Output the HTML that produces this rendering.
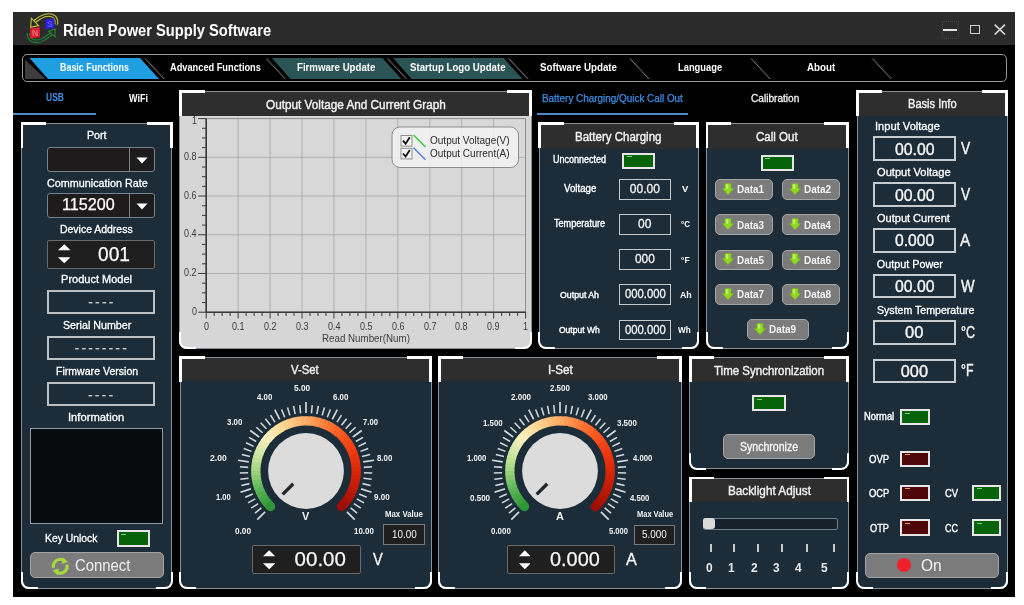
<!DOCTYPE html>
<html><head><meta charset="utf-8"><title>Riden Power Supply Software</title>
<style>
html,body{margin:0;padding:0;background:#fff;}
body{width:1024px;height:605px;position:relative;overflow:hidden;filter:blur(0.45px);font-family:"Liberation Sans",sans-serif;}
.a{position:absolute;display:block;}
.t{position:absolute;white-space:nowrap;transform-origin:0 50%;}
</style></head><body>
<div class="a" style="left:13.2px;top:12px;width:1002.3px;height:584.6px;background:#000;"></div>
<div class="a" style="left:13.2px;top:12px;width:1002.3px;height:33.4px;background:#2b2b2b;"></div>
<svg class="a" style="left:24px;top:12px" width="40" height="33" viewBox="24 12 40 33">
<path d="M56.3 24.5 C58 14.5 48 13 40.5 17.5 L34.5 21.5" fill="none" stroke="#c9c336" stroke-width="3.6"/>
<path d="M56.3 24.5 C58 14.5 48 13 40.5 17.5 L34.5 21.5" fill="none" stroke="#2b2b2b" stroke-width="1.5"/>
<path d="M30.6 27.3 L31.4 18.2 L38.6 25.6 Z" fill="#2b2b2b" stroke="#c9c336" stroke-width="1.1"/>
<path d="M28.5 33 C28 41.5 37 43 43 39.5 L52 33.5" fill="none" stroke="#1f8a34" stroke-width="3.6"/>
<path d="M28.5 33 C28 41.5 37 43 43 39.5 L52 33.5" fill="none" stroke="#2b2b2b" stroke-width="1.5"/>
<path d="M55 29 L55 36.8 L48.6 31.2 Z" fill="#2b2b2b" stroke="#1f8a34" stroke-width="1.1"/>
<path d="M45.2 19.4 L54.4 18.2 L54.4 28 L45.2 29.2 Z" fill="#2a1fd2"/>
<path d="M30 28.3 L40 27.2 L40 37.3 L30 38.4 Z" fill="#d81c2c"/>
<text x="35" y="36.4" font-size="8.5" font-weight="bold" text-anchor="middle" fill="#f2787e" font-family="Liberation Sans, sans-serif">N</text>
<text x="49.8" y="27" font-size="8.5" font-weight="bold" text-anchor="middle" fill="#6058f2" font-family="Liberation Sans, sans-serif">S</text>
</svg>
<div class="t" style="left:63.3px;top:21.75px;font-size:16.5px;line-height:16.5px;color:#fff;font-weight:bold;transform:scaleX(0.89);">Riden Power Supply Software</div>
<div class="a" style="left:941.5px;top:20.5px;width:17px;height:18px;border:1px dotted #454545;box-sizing:border-box;"></div>
<div class="a" style="left:943px;top:28.7px;width:14px;height:2.6px;background:#e6e6e6;"></div>
<div class="a" style="left:970px;top:25px;width:9.5px;height:9.3px;border:1.5px solid #d0d0d0;box-sizing:border-box;"></div>
<svg class="a" style="left:993px;top:23px" width="14" height="13" viewBox="0 0 14 13"><path d="M1.7 1.7 L12 11.5 M12 1.7 L1.7 11.5" stroke="#dcdcdc" stroke-width="1.6" fill="none"/></svg>
<div class="a" style="left:22px;top:54px;width:984.8px;height:28.3px;background:#000;border:1px solid #9a9a9a;box-sizing:border-box;border-radius:5px;"></div>
<svg class="a" style="left:0;top:50px" width="1024" height="36" viewBox="0 50 1024 36"><polygon points="25,59.5 25,79 45.5,79" fill="#3d3d3d"/><polygon points="29.5,58 140,58 159,79 48,79" fill="#1f9fe2"/><polygon points="271.9,58 382.4,58 401.4,79 290.4,79" fill="#2b5456"/><polygon points="393.1,58 503.6,58 522.6,79 411.6,79" fill="#2b5456"/><path d="M145 58.5 L164 79" stroke="#777" stroke-width="1" fill="none"/><path d="M146.2 58.5 L165.2 79" stroke="#262626" stroke-width="1" fill="none"/><path d="M266.2 58.5 L285.2 79" stroke="#777" stroke-width="1" fill="none"/><path d="M267.4 58.5 L286.4 79" stroke="#262626" stroke-width="1" fill="none"/><path d="M387.4 58.5 L406.4 79" stroke="#777" stroke-width="1" fill="none"/><path d="M388.6 58.5 L407.6 79" stroke="#262626" stroke-width="1" fill="none"/><path d="M508.6 58.5 L527.6 79" stroke="#777" stroke-width="1" fill="none"/><path d="M509.8 58.5 L528.8 79" stroke="#262626" stroke-width="1" fill="none"/><path d="M629.8 58.5 L648.8 79" stroke="#777" stroke-width="1" fill="none"/><path d="M631 58.5 L650 79" stroke="#262626" stroke-width="1" fill="none"/><path d="M751 58.5 L770 79" stroke="#777" stroke-width="1" fill="none"/><path d="M752.2 58.5 L771.2 79" stroke="#262626" stroke-width="1" fill="none"/><path d="M872.2 58.5 L891.2 79" stroke="#777" stroke-width="1" fill="none"/><path d="M873.4 58.5 L892.4 79" stroke="#262626" stroke-width="1" fill="none"/></svg>
<div class="t" style="left:60px;top:62.15px;font-size:10.5px;line-height:10.5px;color:#fff;font-weight:bold;transform:scaleX(0.85);">Basic Functions</div>
<div class="t" style="left:170px;top:62.15px;font-size:10.5px;line-height:10.5px;color:#fff;font-weight:bold;transform:scaleX(0.88);">Advanced Functions</div>
<div class="t" style="left:297.25px;top:62.15px;font-size:10.5px;line-height:10.5px;color:#fff;font-weight:bold;transform:scaleX(0.92);">Firmware Update</div>
<div class="t" style="left:410.25px;top:62.15px;font-size:10.5px;line-height:10.5px;color:#fff;font-weight:bold;transform:scaleX(0.92);">Startup Logo Update</div>
<div class="t" style="left:540px;top:62.15px;font-size:10.5px;line-height:10.5px;color:#fff;font-weight:bold;transform:scaleX(0.93);">Software Update</div>
<div class="t" style="left:677.75px;top:62.15px;font-size:10.5px;line-height:10.5px;color:#fff;font-weight:bold;transform:scaleX(0.89);">Language</div>
<div class="t" style="left:806.75px;top:62.15px;font-size:10.5px;line-height:10.5px;color:#fff;font-weight:bold;transform:scaleX(0.93);">About</div>
<div class="t" style="left:46px;top:93px;font-size:10px;line-height:10px;color:#3f8fe6;font-weight:bold;transform:scaleX(0.85);">USB</div>
<div class="a" style="left:13px;top:113px;width:83px;height:2px;background:#4f86cc;"></div>
<div class="t" style="left:129px;top:92.75px;font-size:10.5px;line-height:10.5px;color:#fff;font-weight:bold;transform:scaleX(0.86);">WiFi</div>
<div class="t" style="left:541.5px;top:93.2px;font-size:11px;line-height:11px;color:#3f8fe6;-webkit-text-stroke:0.25px #3f8fe6;transform:scaleX(0.9);">Battery Charging/Quick Call Out</div>
<div class="a" style="left:537px;top:113px;width:151px;height:2px;background:#4f86cc;"></div>
<div class="t" style="left:751px;top:92.8px;font-size:11px;line-height:11px;color:#f4f4f4;-webkit-text-stroke:0.3px #f4f4f4;transform:scaleX(0.92);">Calibration</div>
<div class="a" style="left:20.9px;top:122.9px;width:151.5px;height:466.2px;background:#1c2d39;border:1.4px solid #86929a;box-sizing:border-box;border-radius:0 0 7px 7px;"></div>
<div class="a" style="left:20.5px;top:122px;width:25.5px;height:2.8px;background:#fff;"></div>
<div class="a" style="left:20.5px;top:122px;width:2.8px;height:25.5px;background:#fff;"></div>
<div class="a" style="left:147.3px;top:122px;width:25.5px;height:2.8px;background:#fff;"></div>
<div class="a" style="left:170px;top:122px;width:2.8px;height:25.5px;background:#fff;"></div>
<div class="a" style="left:20.5px;top:572.3px;width:17px;height:17px;border-left:2.8px solid #fff;border-bottom:2.8px solid #fff;border-radius:0 0 0 8px;box-sizing:border-box;"></div>
<div class="a" style="left:155.8px;top:572.3px;width:17px;height:17px;border-right:2.8px solid #fff;border-bottom:2.8px solid #fff;border-radius:0 0 8px 0;box-sizing:border-box;"></div>
<div class="t" style="left:87.25px;top:129.8px;font-size:11px;line-height:11px;color:#fff;-webkit-text-stroke:0.3px #fff;transform:scaleX(0.97);">Port</div>
<div class="a" style="left:46.7px;top:146.9px;width:108.5px;height:25.6px;background:#1d1b1b;border:1.2px solid #78828a;box-sizing:border-box;border-radius:3px;"></div>
<div class="a" style="left:129.2px;top:147.9px;width:1.2px;height:23.6px;background:#78828a;"></div>
<svg class="a" style="left:136px;top:156.7px" width="12" height="7" viewBox="0 0 12 7"><path d="M0.5 0.5 L11.5 0.5 L6 6.5 Z" fill="#fff"/></svg>
<div class="t" style="left:46.5px;top:178.1px;font-size:11px;line-height:11px;color:#fff;-webkit-text-stroke:0.3px #fff;transform:scaleX(0.98);">Communication Rate</div>
<div class="a" style="left:46.7px;top:193.3px;width:108.5px;height:25.1px;background:#1d1b1b;border:1.2px solid #78828a;box-sizing:border-box;border-radius:3px;"></div>
<div class="a" style="left:129.2px;top:194.3px;width:1.2px;height:23.1px;background:#78828a;"></div>
<svg class="a" style="left:136px;top:202.85px" width="12" height="7" viewBox="0 0 12 7"><path d="M0.5 0.5 L11.5 0.5 L6 6.5 Z" fill="#fff"/></svg>
<div class="t" style="left:62.4px;top:197.2px;font-size:16px;line-height:16px;color:#fff;-webkit-text-stroke:0.25px #fff;transform:scaleX(1.01);">115200</div>
<div class="t" style="left:60px;top:224px;font-size:11px;line-height:11px;color:#fff;-webkit-text-stroke:0.3px #fff;transform:scaleX(0.95);">Device Address</div>
<div class="a" style="left:46.7px;top:239.5px;width:108.5px;height:29.1px;background:#1f1f1f;border:1px solid #6a6a6a;box-sizing:border-box;border-radius:2px;"></div>
<svg class="a" style="left:57.6px;top:244.35px" width="12.5" height="20" viewBox="0 0 12.5 20"><path d="M0 6.3 L12.5 6.3 L6.25 0.3 Z M0 13.3 L12.5 13.3 L6.25 19.3 Z" fill="#fff"/></svg>
<div class="t" style="left:97.6px;top:242.7px;font-size:21px;line-height:21px;color:#fff;-webkit-text-stroke:0.25px #fff;transform:scaleX(0.91);">001</div>
<div class="t" style="left:61.1px;top:274.2px;font-size:11px;line-height:11px;color:#fff;-webkit-text-stroke:0.3px #fff;transform:scaleX(1);">Product Model</div>
<div class="a" style="left:46.7px;top:289.5px;width:108.4px;height:24.8px;border:2px solid #bcc0c3;box-sizing:border-box;"></div>
<div class="t" style="left:88.3px;top:295.2px;font-size:14px;line-height:14px;color:#c4c9cc;letter-spacing:2.13px;-webkit-text-stroke:0.2px #c4c9cc;">----</div>
<div class="t" style="left:62.5px;top:320.3px;font-size:11px;line-height:11px;color:#fff;-webkit-text-stroke:0.3px #fff;transform:scaleX(0.97);">Serial Number</div>
<div class="a" style="left:46.7px;top:335.5px;width:108.4px;height:24.5px;border:2px solid #bcc0c3;box-sizing:border-box;"></div>
<div class="t" style="left:74.6px;top:341.3px;font-size:14px;line-height:14px;color:#c4c9cc;letter-spacing:2.13px;-webkit-text-stroke:0.2px #c4c9cc;">--------</div>
<div class="t" style="left:55.8px;top:366px;font-size:11px;line-height:11px;color:#fff;-webkit-text-stroke:0.3px #fff;transform:scaleX(0.96);">Firmware Version</div>
<div class="a" style="left:46.7px;top:381.7px;width:108.4px;height:24.6px;border:2px solid #bcc0c3;box-sizing:border-box;"></div>
<div class="t" style="left:88px;top:387.5px;font-size:14px;line-height:14px;color:#c4c9cc;letter-spacing:2.13px;-webkit-text-stroke:0.2px #c4c9cc;">----</div>
<div class="t" style="left:68.2px;top:411.8px;font-size:11px;line-height:11px;color:#fff;-webkit-text-stroke:0.3px #fff;transform:scaleX(1.02);">Information</div>
<div class="a" style="left:30.3px;top:427.8px;width:133px;height:96.5px;background:#070b0e;border:1px solid #8e989e;box-sizing:border-box;"></div>
<div class="t" style="left:45.4px;top:533px;font-size:11px;line-height:11px;color:#fff;-webkit-text-stroke:0.3px #fff;transform:scaleX(0.94);">Key Unlock</div>
<div class="a" style="left:116.6px;top:530px;width:33.4px;height:16.7px;background:#07630a;border:2px solid #e6e6e6;box-sizing:border-box;"></div>
<div class="a" style="left:121.1px;top:533.6px;width:5px;height:1.2px;background:#7fd07f;"></div>
<div class="a" style="left:29.8px;top:552.4px;width:133.9px;height:25.7px;background:#7b7b7b;border:1.5px solid #a4a4a4;box-sizing:border-box;border-radius:5px;"></div>
<svg class="a" style="left:50.4px;top:555.7px" width="20.5" height="20.5" viewBox="0 0 18 18">
<path d="M3.2 10.5 A6 6 0 0 1 12.6 4.2" fill="none" stroke="#a6d93c" stroke-width="2.7"/>
<path d="M11.2 1.2 L15.8 5.2 L10.2 7 Z" fill="#a6d93c"/>
<path d="M14.8 7.5 A6 6 0 0 1 5.4 13.8" fill="none" stroke="#a6d93c" stroke-width="2.7"/>
<path d="M6.8 16.8 L2.2 12.8 L7.8 11 Z" fill="#a6d93c"/>
</svg>
<div class="t" style="left:75px;top:557.7px;font-size:15.8px;line-height:15.8px;color:#f0f0f0;transform:scaleX(0.94);">Connect</div>
<div class="a" style="left:179.4px;top:90.9px;width:352.2px;height:258.2px;background:#d6d6d6;border:1.4px solid #86929a;box-sizing:border-box;border-radius:0 0 7px 7px;"></div>
<div class="a" style="left:180.8px;top:92.3px;width:349.4px;height:24px;background:#2e2e2e;"></div>
<div class="a" style="left:179px;top:90px;width:25.5px;height:2.8px;background:#fff;"></div>
<div class="a" style="left:179px;top:90px;width:2.8px;height:25.5px;background:#fff;"></div>
<div class="a" style="left:506.5px;top:90px;width:25.5px;height:2.8px;background:#fff;"></div>
<div class="a" style="left:529.2px;top:90px;width:2.8px;height:25.5px;background:#fff;"></div>
<div class="a" style="left:179px;top:332.3px;width:17px;height:17px;border-left:2.8px solid #fff;border-bottom:2.8px solid #fff;border-radius:0 0 0 8px;box-sizing:border-box;"></div>
<div class="a" style="left:515px;top:332.3px;width:17px;height:17px;border-right:2.8px solid #fff;border-bottom:2.8px solid #fff;border-radius:0 0 8px 0;box-sizing:border-box;"></div>
<div class="t" style="left:265.7px;top:99px;font-size:12px;line-height:12px;color:#f0f0f0;-webkit-text-stroke:0.4px #f0f0f0;transform:scaleX(0.98);">Output Voltage And Current Graph</div>
<svg class="a" style="left:180px;top:116px" width="352" height="232" viewBox="180 116 352 232"><rect x="206.2" y="118.6" width="319.4" height="193.6" fill="#d8d8d8"/><path d="M238.14 118.6 V312.2" stroke="#b0b0b0" stroke-width="1"/><path d="M270.08 118.6 V312.2" stroke="#b0b0b0" stroke-width="1"/><path d="M302.02 118.6 V312.2" stroke="#b0b0b0" stroke-width="1"/><path d="M333.96 118.6 V312.2" stroke="#b0b0b0" stroke-width="1"/><path d="M365.9 118.6 V312.2" stroke="#b0b0b0" stroke-width="1"/><path d="M397.84 118.6 V312.2" stroke="#b0b0b0" stroke-width="1"/><path d="M429.78 118.6 V312.2" stroke="#b0b0b0" stroke-width="1"/><path d="M461.72 118.6 V312.2" stroke="#b0b0b0" stroke-width="1"/><path d="M493.66 118.6 V312.2" stroke="#b0b0b0" stroke-width="1"/><path d="M206.2 273.48 H525.6" stroke="#b0b0b0" stroke-width="1"/><path d="M206.2 234.76 H525.6" stroke="#b0b0b0" stroke-width="1"/><path d="M206.2 196.04 H525.6" stroke="#b0b0b0" stroke-width="1"/><path d="M206.2 157.32 H525.6" stroke="#b0b0b0" stroke-width="1"/><rect x="206.2" y="118.6" width="319.4" height="193.6" fill="none" stroke="#8a8a8a" stroke-width="1"/><path d="M206.2 118.6 V312.2 H525.6" stroke="#3c3c3c" stroke-width="1.6" fill="none"/><path d="M206.2 312.2 v6.3" stroke="#3a3a3a" stroke-width="1"/><path d="M214.19 312.2 v3.8" stroke="#3a3a3a" stroke-width="1"/><path d="M222.17 312.2 v3.8" stroke="#3a3a3a" stroke-width="1"/><path d="M230.16 312.2 v3.8" stroke="#3a3a3a" stroke-width="1"/><path d="M238.14 312.2 v6.3" stroke="#3a3a3a" stroke-width="1"/><path d="M246.12 312.2 v3.8" stroke="#3a3a3a" stroke-width="1"/><path d="M254.11 312.2 v3.8" stroke="#3a3a3a" stroke-width="1"/><path d="M262.09 312.2 v3.8" stroke="#3a3a3a" stroke-width="1"/><path d="M270.08 312.2 v6.3" stroke="#3a3a3a" stroke-width="1"/><path d="M278.06 312.2 v3.8" stroke="#3a3a3a" stroke-width="1"/><path d="M286.05 312.2 v3.8" stroke="#3a3a3a" stroke-width="1"/><path d="M294.03 312.2 v3.8" stroke="#3a3a3a" stroke-width="1"/><path d="M302.02 312.2 v6.3" stroke="#3a3a3a" stroke-width="1"/><path d="M310 312.2 v3.8" stroke="#3a3a3a" stroke-width="1"/><path d="M317.99 312.2 v3.8" stroke="#3a3a3a" stroke-width="1"/><path d="M325.98 312.2 v3.8" stroke="#3a3a3a" stroke-width="1"/><path d="M333.96 312.2 v6.3" stroke="#3a3a3a" stroke-width="1"/><path d="M341.94 312.2 v3.8" stroke="#3a3a3a" stroke-width="1"/><path d="M349.93 312.2 v3.8" stroke="#3a3a3a" stroke-width="1"/><path d="M357.91 312.2 v3.8" stroke="#3a3a3a" stroke-width="1"/><path d="M365.9 312.2 v6.3" stroke="#3a3a3a" stroke-width="1"/><path d="M373.88 312.2 v3.8" stroke="#3a3a3a" stroke-width="1"/><path d="M381.87 312.2 v3.8" stroke="#3a3a3a" stroke-width="1"/><path d="M389.86 312.2 v3.8" stroke="#3a3a3a" stroke-width="1"/><path d="M397.84 312.2 v6.3" stroke="#3a3a3a" stroke-width="1"/><path d="M405.83 312.2 v3.8" stroke="#3a3a3a" stroke-width="1"/><path d="M413.81 312.2 v3.8" stroke="#3a3a3a" stroke-width="1"/><path d="M421.8 312.2 v3.8" stroke="#3a3a3a" stroke-width="1"/><path d="M429.78 312.2 v6.3" stroke="#3a3a3a" stroke-width="1"/><path d="M437.76 312.2 v3.8" stroke="#3a3a3a" stroke-width="1"/><path d="M445.75 312.2 v3.8" stroke="#3a3a3a" stroke-width="1"/><path d="M453.74 312.2 v3.8" stroke="#3a3a3a" stroke-width="1"/><path d="M461.72 312.2 v6.3" stroke="#3a3a3a" stroke-width="1"/><path d="M469.7 312.2 v3.8" stroke="#3a3a3a" stroke-width="1"/><path d="M477.69 312.2 v3.8" stroke="#3a3a3a" stroke-width="1"/><path d="M485.68 312.2 v3.8" stroke="#3a3a3a" stroke-width="1"/><path d="M493.66 312.2 v6.3" stroke="#3a3a3a" stroke-width="1"/><path d="M501.65 312.2 v3.8" stroke="#3a3a3a" stroke-width="1"/><path d="M509.63 312.2 v3.8" stroke="#3a3a3a" stroke-width="1"/><path d="M517.62 312.2 v3.8" stroke="#3a3a3a" stroke-width="1"/><path d="M525.6 312.2 v6.3" stroke="#3a3a3a" stroke-width="1"/><path d="M206.2 312.2 h-8" stroke="#3a3a3a" stroke-width="1"/><path d="M206.2 302.52 h-4.2" stroke="#3a3a3a" stroke-width="1"/><path d="M206.2 292.84 h-4.2" stroke="#3a3a3a" stroke-width="1"/><path d="M206.2 283.16 h-4.2" stroke="#3a3a3a" stroke-width="1"/><path d="M206.2 273.48 h-8" stroke="#3a3a3a" stroke-width="1"/><path d="M206.2 263.8 h-4.2" stroke="#3a3a3a" stroke-width="1"/><path d="M206.2 254.12 h-4.2" stroke="#3a3a3a" stroke-width="1"/><path d="M206.2 244.44 h-4.2" stroke="#3a3a3a" stroke-width="1"/><path d="M206.2 234.76 h-8" stroke="#3a3a3a" stroke-width="1"/><path d="M206.2 225.08 h-4.2" stroke="#3a3a3a" stroke-width="1"/><path d="M206.2 215.4 h-4.2" stroke="#3a3a3a" stroke-width="1"/><path d="M206.2 205.72 h-4.2" stroke="#3a3a3a" stroke-width="1"/><path d="M206.2 196.04 h-8" stroke="#3a3a3a" stroke-width="1"/><path d="M206.2 186.36 h-4.2" stroke="#3a3a3a" stroke-width="1"/><path d="M206.2 176.68 h-4.2" stroke="#3a3a3a" stroke-width="1"/><path d="M206.2 167 h-4.2" stroke="#3a3a3a" stroke-width="1"/><path d="M206.2 157.32 h-8" stroke="#3a3a3a" stroke-width="1"/><path d="M206.2 147.64 h-4.2" stroke="#3a3a3a" stroke-width="1"/><path d="M206.2 137.96 h-4.2" stroke="#3a3a3a" stroke-width="1"/><path d="M206.2 128.28 h-4.2" stroke="#3a3a3a" stroke-width="1"/><path d="M206.2 118.6 h-8" stroke="#3a3a3a" stroke-width="1"/><rect x="392" y="127" width="126.5" height="40.5" rx="8" fill="#f4f4f4" fill-opacity="0.82" stroke="#8c8c8c" stroke-width="1"/><rect x="401" y="135.5" width="11" height="10.6" fill="#f4f4f4" stroke="#8e8e8e" stroke-width="1"/><path d="M403 140.7 l2.6 3 l4.2 -6.4" fill="none" stroke="#111" stroke-width="1.8"/><path d="M413.5 135 L425.5 147" stroke="#35d23a" stroke-width="1.6"/><rect x="401" y="148.3" width="11" height="10.6" fill="#f4f4f4" stroke="#8e8e8e" stroke-width="1"/><path d="M403 153.5 l2.6 3 l4.2 -6.4" fill="none" stroke="#111" stroke-width="1.8"/><path d="M413.5 147.8 L425.5 159.8" stroke="#5a86ea" stroke-width="1.6"/></svg>
<div class="t" style="left:191.5px;top:306.9px;font-size:10px;line-height:10px;color:#3c3c3c;transform:scaleX(0.9);">0</div>
<div class="t" style="left:183.99px;top:268.18px;font-size:10px;line-height:10px;color:#3c3c3c;transform:scaleX(0.9);">0.2</div>
<div class="t" style="left:183.99px;top:229.46px;font-size:10px;line-height:10px;color:#3c3c3c;transform:scaleX(0.9);">0.4</div>
<div class="t" style="left:183.99px;top:190.74px;font-size:10px;line-height:10px;color:#3c3c3c;transform:scaleX(0.9);">0.6</div>
<div class="t" style="left:183.99px;top:152.02px;font-size:10px;line-height:10px;color:#3c3c3c;transform:scaleX(0.9);">0.8</div>
<div class="t" style="left:191.5px;top:115.6px;font-size:10px;line-height:10px;color:#3c3c3c;transform:scaleX(0.9);">1</div>
<div class="t" style="left:203.7px;top:321.8px;font-size:10px;line-height:10px;color:#3c3c3c;transform:scaleX(0.9);">0</div>
<div class="t" style="left:231.88px;top:321.8px;font-size:10px;line-height:10px;color:#3c3c3c;transform:scaleX(0.9);">0.1</div>
<div class="t" style="left:263.82px;top:321.8px;font-size:10px;line-height:10px;color:#3c3c3c;transform:scaleX(0.9);">0.2</div>
<div class="t" style="left:295.76px;top:321.8px;font-size:10px;line-height:10px;color:#3c3c3c;transform:scaleX(0.9);">0.3</div>
<div class="t" style="left:327.71px;top:321.8px;font-size:10px;line-height:10px;color:#3c3c3c;transform:scaleX(0.9);">0.4</div>
<div class="t" style="left:359.64px;top:321.8px;font-size:10px;line-height:10px;color:#3c3c3c;transform:scaleX(0.9);">0.5</div>
<div class="t" style="left:391.59px;top:321.8px;font-size:10px;line-height:10px;color:#3c3c3c;transform:scaleX(0.9);">0.6</div>
<div class="t" style="left:423.52px;top:321.8px;font-size:10px;line-height:10px;color:#3c3c3c;transform:scaleX(0.9);">0.7</div>
<div class="t" style="left:455.47px;top:321.8px;font-size:10px;line-height:10px;color:#3c3c3c;transform:scaleX(0.9);">0.8</div>
<div class="t" style="left:487.41px;top:321.8px;font-size:10px;line-height:10px;color:#3c3c3c;transform:scaleX(0.9);">0.9</div>
<div class="t" style="left:523.1px;top:321.8px;font-size:10px;line-height:10px;color:#3c3c3c;transform:scaleX(0.9);">1</div>
<div class="t" style="left:321.5px;top:332.75px;font-size:10.5px;line-height:10.5px;color:#3c3c3c;transform:scaleX(0.93);">Read Number(Num)</div>
<div class="t" style="left:430.25px;top:135.3px;font-size:11px;line-height:11px;color:#2c2c2c;transform:scaleX(0.91);">Output Voltage(V)</div>
<div class="t" style="left:430.25px;top:147.8px;font-size:11px;line-height:11px;color:#2c2c2c;transform:scaleX(0.91);">Output Current(A)</div>
<div class="a" style="left:538.7px;top:122.9px;width:159.9px;height:226.2px;background:#1c2d39;border:1.4px solid #86929a;box-sizing:border-box;border-radius:0 0 7px 7px;"></div>
<div class="a" style="left:540.1px;top:124.3px;width:157.1px;height:24.4px;background:#2e2e2e;"></div>
<div class="a" style="left:538.3px;top:122px;width:25.5px;height:2.8px;background:#fff;"></div>
<div class="a" style="left:538.3px;top:122px;width:2.8px;height:25.5px;background:#fff;"></div>
<div class="a" style="left:673.5px;top:122px;width:25.5px;height:2.8px;background:#fff;"></div>
<div class="a" style="left:696.2px;top:122px;width:2.8px;height:25.5px;background:#fff;"></div>
<div class="a" style="left:538.3px;top:332.3px;width:17px;height:17px;border-left:2.8px solid #fff;border-bottom:2.8px solid #fff;border-radius:0 0 0 8px;box-sizing:border-box;"></div>
<div class="a" style="left:682px;top:332.3px;width:17px;height:17px;border-right:2.8px solid #fff;border-bottom:2.8px solid #fff;border-radius:0 0 8px 0;box-sizing:border-box;"></div>
<div class="t" style="left:574.8px;top:131.3px;font-size:12px;line-height:12px;color:#f0f0f0;-webkit-text-stroke:0.4px #f0f0f0;transform:scaleX(0.96);">Battery Charging</div>
<div class="t" style="left:553px;top:155px;font-size:10px;line-height:10px;color:#fff;-webkit-text-stroke:0.35px #fff;transform:scaleX(0.9);">Unconnected</div>
<div class="a" style="left:622px;top:152.5px;width:33px;height:16.3px;background:#07630a;border:2px solid #e6e6e6;box-sizing:border-box;"></div>
<div class="a" style="left:626.5px;top:156.1px;width:5px;height:1.2px;background:#7fd07f;"></div>
<div class="t" style="left:563.75px;top:183.8px;font-size:10px;line-height:10px;color:#fff;-webkit-text-stroke:0.35px #fff;transform:scaleX(0.97);">Voltage</div>
<div class="a" style="left:618.7px;top:179.1px;width:51.9px;height:20.7px;border:1.8px solid #c6c9cb;box-sizing:border-box;"></div>
<div class="t" style="left:629.8px;top:183px;font-size:12px;line-height:12px;color:#f2f2f2;-webkit-text-stroke:0.3px #f2f2f2;transform:scaleX(1);">00.00</div>
<div class="t" style="left:682.4px;top:184.2px;font-size:9.6px;line-height:9.6px;color:#fff;font-weight:bold;transform:scaleX(0.98);">V</div>
<div class="t" style="left:554px;top:219px;font-size:10px;line-height:10px;color:#fff;-webkit-text-stroke:0.35px #fff;transform:scaleX(0.91);">Temperature</div>
<div class="a" style="left:618.7px;top:214.2px;width:51.9px;height:20.7px;border:1.8px solid #c6c9cb;box-sizing:border-box;"></div>
<div class="t" style="left:638px;top:218.1px;font-size:12px;line-height:12px;color:#f2f2f2;-webkit-text-stroke:0.3px #f2f2f2;transform:scaleX(1);">00</div>
<div class="t" style="left:681.3px;top:219.2px;font-size:9.6px;line-height:9.6px;color:#fff;font-weight:bold;transform:scaleX(0.84);">°C</div>
<div class="a" style="left:618.7px;top:249.3px;width:51.9px;height:20.7px;border:1.8px solid #c6c9cb;box-sizing:border-box;"></div>
<div class="t" style="left:634.5px;top:253.2px;font-size:12px;line-height:12px;color:#f2f2f2;-webkit-text-stroke:0.3px #f2f2f2;transform:scaleX(0.99);">000</div>
<div class="t" style="left:681.3px;top:254.7px;font-size:9.6px;line-height:9.6px;color:#fff;font-weight:bold;transform:scaleX(0.88);">°F</div>
<div class="t" style="left:560.4px;top:290.7px;font-size:8.6px;line-height:8.6px;color:#fff;-webkit-text-stroke:0.35px #fff;transform:scaleX(1.02);">Output Ah</div>
<div class="a" style="left:618.7px;top:284.3px;width:52.6px;height:20.7px;border:1.8px solid #c6c9cb;box-sizing:border-box;"></div>
<div class="t" style="left:624.6px;top:288.2px;font-size:12px;line-height:12px;color:#f2f2f2;-webkit-text-stroke:0.3px #f2f2f2;transform:scaleX(0.94);">000.000</div>
<div class="t" style="left:679.5px;top:290.1px;font-size:9.8px;line-height:9.8px;color:#fff;font-weight:bold;transform:scaleX(0.9);">Ah</div>
<div class="t" style="left:559.3px;top:325.9px;font-size:8.6px;line-height:8.6px;color:#fff;-webkit-text-stroke:0.35px #fff;transform:scaleX(0.99);">Output Wh</div>
<div class="a" style="left:618.7px;top:319.6px;width:52.6px;height:20.7px;border:1.8px solid #c6c9cb;box-sizing:border-box;"></div>
<div class="t" style="left:624.6px;top:323.5px;font-size:12px;line-height:12px;color:#f2f2f2;-webkit-text-stroke:0.3px #f2f2f2;transform:scaleX(0.94);">000.000</div>
<div class="t" style="left:678px;top:325.9px;font-size:8.6px;line-height:8.6px;color:#fff;font-weight:bold;transform:scaleX(0.95);">Wh</div>
<div class="a" style="left:705.9px;top:122.9px;width:142.9px;height:226.2px;background:#1c2d39;border:1.4px solid #86929a;box-sizing:border-box;border-radius:0 0 7px 7px;"></div>
<div class="a" style="left:707.3px;top:124.3px;width:140.1px;height:24.4px;background:#2e2e2e;"></div>
<div class="a" style="left:705.5px;top:122px;width:25.5px;height:2.8px;background:#fff;"></div>
<div class="a" style="left:705.5px;top:122px;width:2.8px;height:25.5px;background:#fff;"></div>
<div class="a" style="left:823.7px;top:122px;width:25.5px;height:2.8px;background:#fff;"></div>
<div class="a" style="left:846.4px;top:122px;width:2.8px;height:25.5px;background:#fff;"></div>
<div class="a" style="left:705.5px;top:332.3px;width:17px;height:17px;border-left:2.8px solid #fff;border-bottom:2.8px solid #fff;border-radius:0 0 0 8px;box-sizing:border-box;"></div>
<div class="a" style="left:832.2px;top:332.3px;width:17px;height:17px;border-right:2.8px solid #fff;border-bottom:2.8px solid #fff;border-radius:0 0 8px 0;box-sizing:border-box;"></div>
<div class="t" style="left:756.4px;top:131.3px;font-size:12px;line-height:12px;color:#f0f0f0;-webkit-text-stroke:0.4px #f0f0f0;transform:scaleX(0.96);">Call Out</div>
<div class="a" style="left:760.6px;top:154.6px;width:33.4px;height:16.6px;background:#07630a;border:2px solid #e6e6e6;box-sizing:border-box;"></div>
<div class="a" style="left:765.1px;top:158.2px;width:5px;height:1.2px;background:#7fd07f;"></div>
<div class="a" style="left:714.7px;top:179px;width:58.3px;height:21px;background:#7b7b7b;border:1.5px solid #a4a4a4;box-sizing:border-box;border-radius:5px;"></div>
<svg class="a" style="left:722.2px;top:182.7px" width="12" height="13" viewBox="0 0 12 13"><path d="M3 0.6 H9 V5.4 H11.7 L6 11.8 L0.3 5.4 H3 Z" fill="#8fd91e" stroke="#74b516" stroke-width="0.5"/><path d="M3.8 1.2 H6.2 V5.8 H3.8 Z" fill="#c0f065"/></svg>
<div class="t" style="left:737.4px;top:184.35px;font-size:10.7px;line-height:10.7px;color:#f4f4f4;font-weight:bold;transform:scaleX(0.93);">Data1</div>
<div class="a" style="left:781.7px;top:179px;width:58.3px;height:21px;background:#7b7b7b;border:1.5px solid #a4a4a4;box-sizing:border-box;border-radius:5px;"></div>
<svg class="a" style="left:789.2px;top:182.7px" width="12" height="13" viewBox="0 0 12 13"><path d="M3 0.6 H9 V5.4 H11.7 L6 11.8 L0.3 5.4 H3 Z" fill="#8fd91e" stroke="#74b516" stroke-width="0.5"/><path d="M3.8 1.2 H6.2 V5.8 H3.8 Z" fill="#c0f065"/></svg>
<div class="t" style="left:804.4px;top:184.35px;font-size:10.7px;line-height:10.7px;color:#f4f4f4;font-weight:bold;transform:scaleX(0.93);">Data2</div>
<div class="a" style="left:714.7px;top:214.3px;width:58.3px;height:20.7px;background:#7b7b7b;border:1.5px solid #a4a4a4;box-sizing:border-box;border-radius:5px;"></div>
<svg class="a" style="left:722.2px;top:217.85px" width="12" height="13" viewBox="0 0 12 13"><path d="M3 0.6 H9 V5.4 H11.7 L6 11.8 L0.3 5.4 H3 Z" fill="#8fd91e" stroke="#74b516" stroke-width="0.5"/><path d="M3.8 1.2 H6.2 V5.8 H3.8 Z" fill="#c0f065"/></svg>
<div class="t" style="left:737.4px;top:219.5px;font-size:10.7px;line-height:10.7px;color:#f4f4f4;font-weight:bold;transform:scaleX(0.93);">Data3</div>
<div class="a" style="left:781.7px;top:214.3px;width:58.3px;height:20.7px;background:#7b7b7b;border:1.5px solid #a4a4a4;box-sizing:border-box;border-radius:5px;"></div>
<svg class="a" style="left:789.2px;top:217.85px" width="12" height="13" viewBox="0 0 12 13"><path d="M3 0.6 H9 V5.4 H11.7 L6 11.8 L0.3 5.4 H3 Z" fill="#8fd91e" stroke="#74b516" stroke-width="0.5"/><path d="M3.8 1.2 H6.2 V5.8 H3.8 Z" fill="#c0f065"/></svg>
<div class="t" style="left:804.4px;top:219.5px;font-size:10.7px;line-height:10.7px;color:#f4f4f4;font-weight:bold;transform:scaleX(0.93);">Data4</div>
<div class="a" style="left:714.7px;top:249.5px;width:58.3px;height:20.8px;background:#7b7b7b;border:1.5px solid #a4a4a4;box-sizing:border-box;border-radius:5px;"></div>
<svg class="a" style="left:722.2px;top:253.1px" width="12" height="13" viewBox="0 0 12 13"><path d="M3 0.6 H9 V5.4 H11.7 L6 11.8 L0.3 5.4 H3 Z" fill="#8fd91e" stroke="#74b516" stroke-width="0.5"/><path d="M3.8 1.2 H6.2 V5.8 H3.8 Z" fill="#c0f065"/></svg>
<div class="t" style="left:737.4px;top:254.75px;font-size:10.7px;line-height:10.7px;color:#f4f4f4;font-weight:bold;transform:scaleX(0.93);">Data5</div>
<div class="a" style="left:781.7px;top:249.5px;width:58.3px;height:20.8px;background:#7b7b7b;border:1.5px solid #a4a4a4;box-sizing:border-box;border-radius:5px;"></div>
<svg class="a" style="left:789.2px;top:253.1px" width="12" height="13" viewBox="0 0 12 13"><path d="M3 0.6 H9 V5.4 H11.7 L6 11.8 L0.3 5.4 H3 Z" fill="#8fd91e" stroke="#74b516" stroke-width="0.5"/><path d="M3.8 1.2 H6.2 V5.8 H3.8 Z" fill="#c0f065"/></svg>
<div class="t" style="left:804.4px;top:254.75px;font-size:10.7px;line-height:10.7px;color:#f4f4f4;font-weight:bold;transform:scaleX(0.93);">Data6</div>
<div class="a" style="left:714.7px;top:284.3px;width:58.3px;height:20.5px;background:#7b7b7b;border:1.5px solid #a4a4a4;box-sizing:border-box;border-radius:5px;"></div>
<svg class="a" style="left:722.2px;top:287.75px" width="12" height="13" viewBox="0 0 12 13"><path d="M3 0.6 H9 V5.4 H11.7 L6 11.8 L0.3 5.4 H3 Z" fill="#8fd91e" stroke="#74b516" stroke-width="0.5"/><path d="M3.8 1.2 H6.2 V5.8 H3.8 Z" fill="#c0f065"/></svg>
<div class="t" style="left:737.4px;top:289.4px;font-size:10.7px;line-height:10.7px;color:#f4f4f4;font-weight:bold;transform:scaleX(0.93);">Data7</div>
<div class="a" style="left:781.7px;top:284.3px;width:58.3px;height:20.5px;background:#7b7b7b;border:1.5px solid #a4a4a4;box-sizing:border-box;border-radius:5px;"></div>
<svg class="a" style="left:789.2px;top:287.75px" width="12" height="13" viewBox="0 0 12 13"><path d="M3 0.6 H9 V5.4 H11.7 L6 11.8 L0.3 5.4 H3 Z" fill="#8fd91e" stroke="#74b516" stroke-width="0.5"/><path d="M3.8 1.2 H6.2 V5.8 H3.8 Z" fill="#c0f065"/></svg>
<div class="t" style="left:804.4px;top:289.4px;font-size:10.7px;line-height:10.7px;color:#f4f4f4;font-weight:bold;transform:scaleX(0.93);">Data8</div>
<div class="a" style="left:746.5px;top:319.4px;width:62.1px;height:20.3px;background:#7b7b7b;border:1.5px solid #a4a4a4;box-sizing:border-box;border-radius:5px;"></div>
<svg class="a" style="left:754px;top:322.75px" width="12" height="13" viewBox="0 0 12 13"><path d="M3 0.6 H9 V5.4 H11.7 L6 11.8 L0.3 5.4 H3 Z" fill="#8fd91e" stroke="#74b516" stroke-width="0.5"/><path d="M3.8 1.2 H6.2 V5.8 H3.8 Z" fill="#c0f065"/></svg>
<div class="t" style="left:769.2px;top:324.4px;font-size:10.7px;line-height:10.7px;color:#f4f4f4;font-weight:bold;transform:scaleX(0.93);">Data9</div>
<div class="a" style="left:179.5px;top:356.9px;width:252.2px;height:232.3px;background:#1c2d39;border:1.4px solid #86929a;box-sizing:border-box;border-radius:0 0 7px 7px;"></div>
<div class="a" style="left:180.9px;top:358.3px;width:249.4px;height:22.3px;background:#2e2e2e;"></div>
<div class="a" style="left:179.1px;top:356px;width:25.5px;height:2.8px;background:#fff;"></div>
<div class="a" style="left:179.1px;top:356px;width:2.8px;height:25.5px;background:#fff;"></div>
<div class="a" style="left:406.6px;top:356px;width:25.5px;height:2.8px;background:#fff;"></div>
<div class="a" style="left:429.3px;top:356px;width:2.8px;height:25.5px;background:#fff;"></div>
<div class="a" style="left:179.1px;top:572.4px;width:17px;height:17px;border-left:2.8px solid #fff;border-bottom:2.8px solid #fff;border-radius:0 0 0 8px;box-sizing:border-box;"></div>
<div class="a" style="left:415.1px;top:572.4px;width:17px;height:17px;border-right:2.8px solid #fff;border-bottom:2.8px solid #fff;border-radius:0 0 8px 0;box-sizing:border-box;"></div>
<div class="t" style="left:290.7px;top:364.25px;font-size:12.7px;line-height:12.7px;color:#f0f0f0;-webkit-text-stroke:0.4px #f0f0f0;transform:scaleX(0.89);">V-Set</div>
<svg class="a" style="left:225.6px;top:391.4px" width="160" height="160" viewBox="-80 -80 160 160"><path d="M-40.94 40.94 L-48.72 48.72" stroke="#d3d8dc" stroke-width="1.7"/><path d="M-44.61 36.91 L-51.01 42.2" stroke="#d3d8dc" stroke-width="1.55"/><path d="M-47.89 32.54 L-54.75 37.21" stroke="#d3d8dc" stroke-width="1.55"/><path d="M-50.74 27.89 L-58.01 31.89" stroke="#d3d8dc" stroke-width="1.55"/><path d="M-53.14 22.99 L-60.76 26.29" stroke="#d3d8dc" stroke-width="1.55"/><path d="M-55.07 17.89 L-65.53 21.29" stroke="#d3d8dc" stroke-width="1.7"/><path d="M-56.51 12.63 L-64.61 14.44" stroke="#d3d8dc" stroke-width="1.55"/><path d="M-57.44 7.26 L-65.68 8.3" stroke="#d3d8dc" stroke-width="1.55"/><path d="M-57.87 1.82 L-66.17 2.08" stroke="#d3d8dc" stroke-width="1.55"/><path d="M-57.79 -3.64 L-66.07 -4.16" stroke="#d3d8dc" stroke-width="1.55"/><path d="M-57.19 -9.06 L-68.05 -10.78" stroke="#d3d8dc" stroke-width="1.7"/><path d="M-56.08 -14.4 L-64.12 -16.46" stroke="#d3d8dc" stroke-width="1.55"/><path d="M-54.48 -19.61 L-62.29 -22.42" stroke="#d3d8dc" stroke-width="1.55"/><path d="M-52.39 -24.65 L-59.9 -28.19" stroke="#d3d8dc" stroke-width="1.55"/><path d="M-49.84 -29.47 L-56.98 -33.7" stroke="#d3d8dc" stroke-width="1.55"/><path d="M-46.84 -34.03 L-55.74 -40.5" stroke="#d3d8dc" stroke-width="1.7"/><path d="M-43.43 -38.29 L-49.66 -43.78" stroke="#d3d8dc" stroke-width="1.55"/><path d="M-39.64 -42.21 L-45.32 -48.26" stroke="#d3d8dc" stroke-width="1.55"/><path d="M-35.49 -45.75 L-40.57 -52.31" stroke="#d3d8dc" stroke-width="1.55"/><path d="M-31.02 -48.89 L-35.47 -55.89" stroke="#d3d8dc" stroke-width="1.55"/><path d="M-26.29 -51.59 L-31.28 -61.39" stroke="#d3d8dc" stroke-width="1.7"/><path d="M-21.31 -53.83 L-24.37 -61.55" stroke="#d3d8dc" stroke-width="1.55"/><path d="M-16.15 -55.6 L-18.47 -63.57" stroke="#d3d8dc" stroke-width="1.55"/><path d="M-10.85 -56.87 L-12.4 -65.03" stroke="#d3d8dc" stroke-width="1.55"/><path d="M-5.45 -57.64 L-6.23 -65.91" stroke="#d3d8dc" stroke-width="1.55"/><path d="M0 -57.9 L0 -68.9" stroke="#d3d8dc" stroke-width="1.7"/><path d="M5.45 -57.64 L6.23 -65.91" stroke="#d3d8dc" stroke-width="1.55"/><path d="M10.85 -56.87 L12.4 -65.03" stroke="#d3d8dc" stroke-width="1.55"/><path d="M16.15 -55.6 L18.47 -63.57" stroke="#d3d8dc" stroke-width="1.55"/><path d="M21.31 -53.83 L24.37 -61.55" stroke="#d3d8dc" stroke-width="1.55"/><path d="M26.29 -51.59 L31.28 -61.39" stroke="#d3d8dc" stroke-width="1.7"/><path d="M31.02 -48.89 L35.47 -55.89" stroke="#d3d8dc" stroke-width="1.55"/><path d="M35.49 -45.75 L40.57 -52.31" stroke="#d3d8dc" stroke-width="1.55"/><path d="M39.64 -42.21 L45.32 -48.26" stroke="#d3d8dc" stroke-width="1.55"/><path d="M43.43 -38.29 L49.66 -43.78" stroke="#d3d8dc" stroke-width="1.55"/><path d="M46.84 -34.03 L55.74 -40.5" stroke="#d3d8dc" stroke-width="1.7"/><path d="M49.84 -29.47 L56.98 -33.7" stroke="#d3d8dc" stroke-width="1.55"/><path d="M52.39 -24.65 L59.9 -28.19" stroke="#d3d8dc" stroke-width="1.55"/><path d="M54.48 -19.61 L62.29 -22.42" stroke="#d3d8dc" stroke-width="1.55"/><path d="M56.08 -14.4 L64.12 -16.46" stroke="#d3d8dc" stroke-width="1.55"/><path d="M57.19 -9.06 L68.05 -10.78" stroke="#d3d8dc" stroke-width="1.7"/><path d="M57.79 -3.64 L66.07 -4.16" stroke="#d3d8dc" stroke-width="1.55"/><path d="M57.87 1.82 L66.17 2.08" stroke="#d3d8dc" stroke-width="1.55"/><path d="M57.44 7.26 L65.68 8.3" stroke="#d3d8dc" stroke-width="1.55"/><path d="M56.51 12.63 L64.61 14.44" stroke="#d3d8dc" stroke-width="1.55"/><path d="M55.07 17.89 L65.53 21.29" stroke="#d3d8dc" stroke-width="1.7"/><path d="M53.14 22.99 L60.76 26.29" stroke="#d3d8dc" stroke-width="1.55"/><path d="M50.74 27.89 L58.01 31.89" stroke="#d3d8dc" stroke-width="1.55"/><path d="M47.89 32.54 L54.75 37.21" stroke="#d3d8dc" stroke-width="1.55"/><path d="M44.61 36.91 L51.01 42.2" stroke="#d3d8dc" stroke-width="1.55"/><path d="M40.94 40.94 L48.72 48.72" stroke="#d3d8dc" stroke-width="1.7"/><path d="M-35.5 35.5 A50.2 50.2 0 0 1 -39.06 31.54" fill="none" stroke="rgb(51,154,60)" stroke-width="9.3"/><path d="M-38.46 32.27 A50.2 50.2 0 0 1 -41.66 28.01" fill="none" stroke="rgb(60,160,66)" stroke-width="9.3"/><path d="M-41.12 28.79 A50.2 50.2 0 0 1 -43.94 24.28" fill="none" stroke="rgb(69,166,72)" stroke-width="9.3"/><path d="M-43.47 25.1 A50.2 50.2 0 0 1 -45.89 20.35" fill="none" stroke="rgb(78,172,78)" stroke-width="9.3"/><path d="M-45.5 21.22 A50.2 50.2 0 0 1 -47.49 16.28" fill="none" stroke="rgb(89,178,85)" stroke-width="9.3"/><path d="M-47.17 17.17 A50.2 50.2 0 0 1 -48.73 12.08" fill="none" stroke="rgb(104,186,94)" stroke-width="9.3"/><path d="M-48.49 12.99 A50.2 50.2 0 0 1 -49.59 7.78" fill="none" stroke="rgb(120,194,102)" stroke-width="9.3"/><path d="M-49.44 8.72 A50.2 50.2 0 0 1 -50.08 3.43" fill="none" stroke="rgb(136,201,111)" stroke-width="9.3"/><path d="M-50.01 4.38 A50.2 50.2 0 0 1 -50.19 -0.95" fill="none" stroke="rgb(152,209,120)" stroke-width="9.3"/><path d="M-50.2 -0 A50.2 50.2 0 0 1 -49.92 -5.32" fill="none" stroke="rgb(165,215,130)" stroke-width="9.3"/><path d="M-50.01 -4.38 A50.2 50.2 0 0 1 -49.26 -9.65" fill="none" stroke="rgb(177,219,140)" stroke-width="9.3"/><path d="M-49.44 -8.72 A50.2 50.2 0 0 1 -48.24 -13.9" fill="none" stroke="rgb(189,224,149)" stroke-width="9.3"/><path d="M-48.49 -12.99 A50.2 50.2 0 0 1 -46.84 -18.06" fill="none" stroke="rgb(201,228,159)" stroke-width="9.3"/><path d="M-47.17 -17.17 A50.2 50.2 0 0 1 -45.09 -22.07" fill="none" stroke="rgb(213,232,169)" stroke-width="9.3"/><path d="M-45.5 -21.22 A50.2 50.2 0 0 1 -42.99 -25.91" fill="none" stroke="rgb(223,234,174)" stroke-width="9.3"/><path d="M-43.47 -25.1 A50.2 50.2 0 0 1 -40.57 -29.56" fill="none" stroke="rgb(232,236,180)" stroke-width="9.3"/><path d="M-41.12 -28.79 A50.2 50.2 0 0 1 -37.84 -32.99" fill="none" stroke="rgb(242,239,186)" stroke-width="9.3"/><path d="M-38.46 -32.27 A50.2 50.2 0 0 1 -34.82 -36.16" fill="none" stroke="rgb(249,238,187)" stroke-width="9.3"/><path d="M-35.5 -35.5 A50.2 50.2 0 0 1 -31.54 -39.06" fill="none" stroke="rgb(250,233,178)" stroke-width="9.3"/><path d="M-32.27 -38.46 A50.2 50.2 0 0 1 -28.01 -41.66" fill="none" stroke="rgb(252,227,168)" stroke-width="9.3"/><path d="M-28.79 -41.12 A50.2 50.2 0 0 1 -24.28 -43.94" fill="none" stroke="rgb(253,222,159)" stroke-width="9.3"/><path d="M-25.1 -43.47 A50.2 50.2 0 0 1 -20.35 -45.89" fill="none" stroke="rgb(255,216,150)" stroke-width="9.3"/><path d="M-21.22 -45.5 A50.2 50.2 0 0 1 -16.28 -47.49" fill="none" stroke="rgb(255,208,141)" stroke-width="9.3"/><path d="M-17.17 -47.17 A50.2 50.2 0 0 1 -12.08 -48.73" fill="none" stroke="rgb(255,200,132)" stroke-width="9.3"/><path d="M-12.99 -48.49 A50.2 50.2 0 0 1 -7.78 -49.59" fill="none" stroke="rgb(255,191,123)" stroke-width="9.3"/><path d="M-8.72 -49.44 A50.2 50.2 0 0 1 -3.43 -50.08" fill="none" stroke="rgb(255,183,114)" stroke-width="9.3"/><path d="M-4.38 -50.01 A50.2 50.2 0 0 1 0.95 -50.19" fill="none" stroke="rgb(255,175,105)" stroke-width="9.3"/><path d="M0 -50.2 A50.2 50.2 0 0 1 5.32 -49.92" fill="none" stroke="rgb(255,166,96)" stroke-width="9.3"/><path d="M4.38 -50.01 A50.2 50.2 0 0 1 9.65 -49.26" fill="none" stroke="rgb(255,156,87)" stroke-width="9.3"/><path d="M8.72 -49.44 A50.2 50.2 0 0 1 13.9 -48.24" fill="none" stroke="rgb(255,145,78)" stroke-width="9.3"/><path d="M12.99 -48.49 A50.2 50.2 0 0 1 18.06 -46.84" fill="none" stroke="rgb(255,135,69)" stroke-width="9.3"/><path d="M17.17 -47.17 A50.2 50.2 0 0 1 22.07 -45.09" fill="none" stroke="rgb(255,125,60)" stroke-width="9.3"/><path d="M21.22 -45.5 A50.2 50.2 0 0 1 25.91 -42.99" fill="none" stroke="rgb(254,117,53)" stroke-width="9.3"/><path d="M25.1 -43.47 A50.2 50.2 0 0 1 29.56 -40.57" fill="none" stroke="rgb(253,108,46)" stroke-width="9.3"/><path d="M28.79 -41.12 A50.2 50.2 0 0 1 32.99 -37.84" fill="none" stroke="rgb(253,99,39)" stroke-width="9.3"/><path d="M32.27 -38.46 A50.2 50.2 0 0 1 36.16 -34.82" fill="none" stroke="rgb(252,90,32)" stroke-width="9.3"/><path d="M35.5 -35.5 A50.2 50.2 0 0 1 39.06 -31.54" fill="none" stroke="rgb(249,84,29)" stroke-width="9.3"/><path d="M38.46 -32.27 A50.2 50.2 0 0 1 41.66 -28.01" fill="none" stroke="rgb(246,77,26)" stroke-width="9.3"/><path d="M41.12 -28.79 A50.2 50.2 0 0 1 43.94 -24.28" fill="none" stroke="rgb(243,70,22)" stroke-width="9.3"/><path d="M43.47 -25.1 A50.2 50.2 0 0 1 45.89 -20.35" fill="none" stroke="rgb(241,64,19)" stroke-width="9.3"/><path d="M45.5 -21.22 A50.2 50.2 0 0 1 47.49 -16.28" fill="none" stroke="rgb(238,58,16)" stroke-width="9.3"/><path d="M47.17 -17.17 A50.2 50.2 0 0 1 48.73 -12.08" fill="none" stroke="rgb(233,53,14)" stroke-width="9.3"/><path d="M48.49 -12.99 A50.2 50.2 0 0 1 49.59 -7.78" fill="none" stroke="rgb(229,49,13)" stroke-width="9.3"/><path d="M49.44 -8.72 A50.2 50.2 0 0 1 50.08 -3.43" fill="none" stroke="rgb(224,45,11)" stroke-width="9.3"/><path d="M50.01 -4.38 A50.2 50.2 0 0 1 50.19 0.95" fill="none" stroke="rgb(220,41,10)" stroke-width="9.3"/><path d="M50.2 -0 A50.2 50.2 0 0 1 49.92 5.32" fill="none" stroke="rgb(215,37,8)" stroke-width="9.3"/><path d="M50.01 4.38 A50.2 50.2 0 0 1 49.26 9.65" fill="none" stroke="rgb(209,34,8)" stroke-width="9.3"/><path d="M49.44 8.72 A50.2 50.2 0 0 1 48.24 13.9" fill="none" stroke="rgb(202,31,7)" stroke-width="9.3"/><path d="M48.49 12.99 A50.2 50.2 0 0 1 46.84 18.06" fill="none" stroke="rgb(195,29,7)" stroke-width="9.3"/><path d="M47.17 17.17 A50.2 50.2 0 0 1 45.09 22.07" fill="none" stroke="rgb(188,26,6)" stroke-width="9.3"/><path d="M45.5 21.22 A50.2 50.2 0 0 1 42.99 25.91" fill="none" stroke="rgb(181,23,6)" stroke-width="9.3"/><path d="M43.47 25.1 A50.2 50.2 0 0 1 40.57 29.56" fill="none" stroke="rgb(175,20,5)" stroke-width="9.3"/><path d="M41.12 28.79 A50.2 50.2 0 0 1 37.84 32.99" fill="none" stroke="rgb(168,18,5)" stroke-width="9.3"/><path d="M38.46 32.27 A50.2 50.2 0 0 1 35.5 35.5" fill="none" stroke="rgb(161,15,4)" stroke-width="9.3"/><circle cx="-35.5" cy="35.5" r="4.65" fill="rgb(46,150,56)"/><circle cx="35.5" cy="35.5" r="4.65" fill="rgb(158,14,4)"/><circle cx="0" cy="0" r="37.9" fill="#dcdcdc"/><path d="M-12.73 12.73 L-23.33 23.33" stroke="#26292c" stroke-width="3.4"/></svg>
<div class="t" style="left:294.4px;top:384.2px;font-size:9px;line-height:9px;color:#f2f2f2;font-weight:bold;transform:scaleX(0.92);">5.00</div>
<div class="t" style="left:256.7px;top:393.4px;font-size:9px;line-height:9px;color:#f2f2f2;font-weight:bold;transform:scaleX(0.87);">4.00</div>
<div class="t" style="left:332.8px;top:393.4px;font-size:9px;line-height:9px;color:#f2f2f2;font-weight:bold;transform:scaleX(0.88);">6.00</div>
<div class="t" style="left:227.4px;top:418.4px;font-size:9px;line-height:9px;color:#f2f2f2;font-weight:bold;transform:scaleX(0.88);">3.00</div>
<div class="t" style="left:362.6px;top:418.4px;font-size:9px;line-height:9px;color:#f2f2f2;font-weight:bold;transform:scaleX(0.85);">7.00</div>
<div class="t" style="left:210px;top:454.4px;font-size:9px;line-height:9px;color:#f2f2f2;font-weight:bold;transform:scaleX(0.95);">2.00</div>
<div class="t" style="left:377px;top:454.4px;font-size:9px;line-height:9px;color:#f2f2f2;font-weight:bold;transform:scaleX(0.87);">8.00</div>
<div class="t" style="left:215.9px;top:493.2px;font-size:9px;line-height:9px;color:#f2f2f2;font-weight:bold;transform:scaleX(0.84);">1.00</div>
<div class="t" style="left:373.8px;top:493.2px;font-size:9px;line-height:9px;color:#f2f2f2;font-weight:bold;transform:scaleX(0.89);">9.00</div>
<div class="t" style="left:235.3px;top:527.1px;font-size:9px;line-height:9px;color:#f2f2f2;font-weight:bold;transform:scaleX(0.91);">0.00</div>
<div class="t" style="left:354px;top:527.1px;font-size:9px;line-height:9px;color:#f2f2f2;font-weight:bold;transform:scaleX(0.88);">10.00</div>
<div class="t" style="left:301.96px;top:510.85px;font-size:11.5px;line-height:11.5px;color:#f2f2f2;font-weight:bold;transform:scaleX(0.95);">V</div>
<div class="t" style="left:385px;top:509.7px;font-size:8.6px;line-height:8.6px;color:#f2f2f2;font-weight:bold;transform:scaleX(0.91);">Max Value</div>
<div class="a" style="left:382.8px;top:524.3px;width:42.5px;height:20.7px;background:#1f1f1f;border:1px solid #7a7a7a;box-sizing:border-box;"></div>
<div class="t" style="left:391.61px;top:529.3px;font-size:11px;line-height:11px;color:#f2f2f2;transform:scaleX(0.9);">10.00</div>
<div class="a" style="left:252.1px;top:545px;width:108.5px;height:29px;background:#1f1f1f;border:1px solid #6a6a6a;box-sizing:border-box;border-radius:2px;"></div>
<svg class="a" style="left:263px;top:549.8px" width="12.4" height="20" viewBox="0 0 12.4 20"><path d="M0 6.3 L12.4 6.3 L6.2 0.3 Z M0 13.3 L12.4 13.3 L6.2 19.3 Z" fill="#fff"/></svg>
<div class="t" style="left:294.6px;top:549.05px;font-size:20.5px;line-height:20.5px;color:#f6f6f6;-webkit-text-stroke:0.25px #f6f6f6;transform:scaleX(1);">00.00</div>
<div class="t" style="left:373px;top:550.75px;font-size:16.5px;line-height:16.5px;color:#f6f6f6;-webkit-text-stroke:0.3px #f6f6f6;transform:scaleX(0.89);">V</div>
<div class="a" style="left:438.3px;top:356.9px;width:243.5px;height:232.3px;background:#1c2d39;border:1.4px solid #86929a;box-sizing:border-box;border-radius:0 0 7px 7px;"></div>
<div class="a" style="left:439.7px;top:358.3px;width:240.7px;height:22.3px;background:#2e2e2e;"></div>
<div class="a" style="left:437.9px;top:356px;width:25.5px;height:2.8px;background:#fff;"></div>
<div class="a" style="left:437.9px;top:356px;width:2.8px;height:25.5px;background:#fff;"></div>
<div class="a" style="left:656.7px;top:356px;width:25.5px;height:2.8px;background:#fff;"></div>
<div class="a" style="left:679.4px;top:356px;width:2.8px;height:25.5px;background:#fff;"></div>
<div class="a" style="left:437.9px;top:572.4px;width:17px;height:17px;border-left:2.8px solid #fff;border-bottom:2.8px solid #fff;border-radius:0 0 0 8px;box-sizing:border-box;"></div>
<div class="a" style="left:665.2px;top:572.4px;width:17px;height:17px;border-right:2.8px solid #fff;border-bottom:2.8px solid #fff;border-radius:0 0 8px 0;box-sizing:border-box;"></div>
<div class="t" style="left:548.1px;top:364.25px;font-size:12.7px;line-height:12.7px;color:#f0f0f0;-webkit-text-stroke:0.4px #f0f0f0;transform:scaleX(0.92);">I-Set</div>
<svg class="a" style="left:479.8px;top:391.4px" width="160" height="160" viewBox="-80 -80 160 160"><path d="M-40.94 40.94 L-48.72 48.72" stroke="#d3d8dc" stroke-width="1.7"/><path d="M-44.61 36.91 L-51.01 42.2" stroke="#d3d8dc" stroke-width="1.55"/><path d="M-47.89 32.54 L-54.75 37.21" stroke="#d3d8dc" stroke-width="1.55"/><path d="M-50.74 27.89 L-58.01 31.89" stroke="#d3d8dc" stroke-width="1.55"/><path d="M-53.14 22.99 L-60.76 26.29" stroke="#d3d8dc" stroke-width="1.55"/><path d="M-55.07 17.89 L-65.53 21.29" stroke="#d3d8dc" stroke-width="1.7"/><path d="M-56.51 12.63 L-64.61 14.44" stroke="#d3d8dc" stroke-width="1.55"/><path d="M-57.44 7.26 L-65.68 8.3" stroke="#d3d8dc" stroke-width="1.55"/><path d="M-57.87 1.82 L-66.17 2.08" stroke="#d3d8dc" stroke-width="1.55"/><path d="M-57.79 -3.64 L-66.07 -4.16" stroke="#d3d8dc" stroke-width="1.55"/><path d="M-57.19 -9.06 L-68.05 -10.78" stroke="#d3d8dc" stroke-width="1.7"/><path d="M-56.08 -14.4 L-64.12 -16.46" stroke="#d3d8dc" stroke-width="1.55"/><path d="M-54.48 -19.61 L-62.29 -22.42" stroke="#d3d8dc" stroke-width="1.55"/><path d="M-52.39 -24.65 L-59.9 -28.19" stroke="#d3d8dc" stroke-width="1.55"/><path d="M-49.84 -29.47 L-56.98 -33.7" stroke="#d3d8dc" stroke-width="1.55"/><path d="M-46.84 -34.03 L-55.74 -40.5" stroke="#d3d8dc" stroke-width="1.7"/><path d="M-43.43 -38.29 L-49.66 -43.78" stroke="#d3d8dc" stroke-width="1.55"/><path d="M-39.64 -42.21 L-45.32 -48.26" stroke="#d3d8dc" stroke-width="1.55"/><path d="M-35.49 -45.75 L-40.57 -52.31" stroke="#d3d8dc" stroke-width="1.55"/><path d="M-31.02 -48.89 L-35.47 -55.89" stroke="#d3d8dc" stroke-width="1.55"/><path d="M-26.29 -51.59 L-31.28 -61.39" stroke="#d3d8dc" stroke-width="1.7"/><path d="M-21.31 -53.83 L-24.37 -61.55" stroke="#d3d8dc" stroke-width="1.55"/><path d="M-16.15 -55.6 L-18.47 -63.57" stroke="#d3d8dc" stroke-width="1.55"/><path d="M-10.85 -56.87 L-12.4 -65.03" stroke="#d3d8dc" stroke-width="1.55"/><path d="M-5.45 -57.64 L-6.23 -65.91" stroke="#d3d8dc" stroke-width="1.55"/><path d="M0 -57.9 L0 -68.9" stroke="#d3d8dc" stroke-width="1.7"/><path d="M5.45 -57.64 L6.23 -65.91" stroke="#d3d8dc" stroke-width="1.55"/><path d="M10.85 -56.87 L12.4 -65.03" stroke="#d3d8dc" stroke-width="1.55"/><path d="M16.15 -55.6 L18.47 -63.57" stroke="#d3d8dc" stroke-width="1.55"/><path d="M21.31 -53.83 L24.37 -61.55" stroke="#d3d8dc" stroke-width="1.55"/><path d="M26.29 -51.59 L31.28 -61.39" stroke="#d3d8dc" stroke-width="1.7"/><path d="M31.02 -48.89 L35.47 -55.89" stroke="#d3d8dc" stroke-width="1.55"/><path d="M35.49 -45.75 L40.57 -52.31" stroke="#d3d8dc" stroke-width="1.55"/><path d="M39.64 -42.21 L45.32 -48.26" stroke="#d3d8dc" stroke-width="1.55"/><path d="M43.43 -38.29 L49.66 -43.78" stroke="#d3d8dc" stroke-width="1.55"/><path d="M46.84 -34.03 L55.74 -40.5" stroke="#d3d8dc" stroke-width="1.7"/><path d="M49.84 -29.47 L56.98 -33.7" stroke="#d3d8dc" stroke-width="1.55"/><path d="M52.39 -24.65 L59.9 -28.19" stroke="#d3d8dc" stroke-width="1.55"/><path d="M54.48 -19.61 L62.29 -22.42" stroke="#d3d8dc" stroke-width="1.55"/><path d="M56.08 -14.4 L64.12 -16.46" stroke="#d3d8dc" stroke-width="1.55"/><path d="M57.19 -9.06 L68.05 -10.78" stroke="#d3d8dc" stroke-width="1.7"/><path d="M57.79 -3.64 L66.07 -4.16" stroke="#d3d8dc" stroke-width="1.55"/><path d="M57.87 1.82 L66.17 2.08" stroke="#d3d8dc" stroke-width="1.55"/><path d="M57.44 7.26 L65.68 8.3" stroke="#d3d8dc" stroke-width="1.55"/><path d="M56.51 12.63 L64.61 14.44" stroke="#d3d8dc" stroke-width="1.55"/><path d="M55.07 17.89 L65.53 21.29" stroke="#d3d8dc" stroke-width="1.7"/><path d="M53.14 22.99 L60.76 26.29" stroke="#d3d8dc" stroke-width="1.55"/><path d="M50.74 27.89 L58.01 31.89" stroke="#d3d8dc" stroke-width="1.55"/><path d="M47.89 32.54 L54.75 37.21" stroke="#d3d8dc" stroke-width="1.55"/><path d="M44.61 36.91 L51.01 42.2" stroke="#d3d8dc" stroke-width="1.55"/><path d="M40.94 40.94 L48.72 48.72" stroke="#d3d8dc" stroke-width="1.7"/><path d="M-35.5 35.5 A50.2 50.2 0 0 1 -39.06 31.54" fill="none" stroke="rgb(51,154,60)" stroke-width="9.3"/><path d="M-38.46 32.27 A50.2 50.2 0 0 1 -41.66 28.01" fill="none" stroke="rgb(60,160,66)" stroke-width="9.3"/><path d="M-41.12 28.79 A50.2 50.2 0 0 1 -43.94 24.28" fill="none" stroke="rgb(69,166,72)" stroke-width="9.3"/><path d="M-43.47 25.1 A50.2 50.2 0 0 1 -45.89 20.35" fill="none" stroke="rgb(78,172,78)" stroke-width="9.3"/><path d="M-45.5 21.22 A50.2 50.2 0 0 1 -47.49 16.28" fill="none" stroke="rgb(89,178,85)" stroke-width="9.3"/><path d="M-47.17 17.17 A50.2 50.2 0 0 1 -48.73 12.08" fill="none" stroke="rgb(104,186,94)" stroke-width="9.3"/><path d="M-48.49 12.99 A50.2 50.2 0 0 1 -49.59 7.78" fill="none" stroke="rgb(120,194,102)" stroke-width="9.3"/><path d="M-49.44 8.72 A50.2 50.2 0 0 1 -50.08 3.43" fill="none" stroke="rgb(136,201,111)" stroke-width="9.3"/><path d="M-50.01 4.38 A50.2 50.2 0 0 1 -50.19 -0.95" fill="none" stroke="rgb(152,209,120)" stroke-width="9.3"/><path d="M-50.2 -0 A50.2 50.2 0 0 1 -49.92 -5.32" fill="none" stroke="rgb(165,215,130)" stroke-width="9.3"/><path d="M-50.01 -4.38 A50.2 50.2 0 0 1 -49.26 -9.65" fill="none" stroke="rgb(177,219,140)" stroke-width="9.3"/><path d="M-49.44 -8.72 A50.2 50.2 0 0 1 -48.24 -13.9" fill="none" stroke="rgb(189,224,149)" stroke-width="9.3"/><path d="M-48.49 -12.99 A50.2 50.2 0 0 1 -46.84 -18.06" fill="none" stroke="rgb(201,228,159)" stroke-width="9.3"/><path d="M-47.17 -17.17 A50.2 50.2 0 0 1 -45.09 -22.07" fill="none" stroke="rgb(213,232,169)" stroke-width="9.3"/><path d="M-45.5 -21.22 A50.2 50.2 0 0 1 -42.99 -25.91" fill="none" stroke="rgb(223,234,174)" stroke-width="9.3"/><path d="M-43.47 -25.1 A50.2 50.2 0 0 1 -40.57 -29.56" fill="none" stroke="rgb(232,236,180)" stroke-width="9.3"/><path d="M-41.12 -28.79 A50.2 50.2 0 0 1 -37.84 -32.99" fill="none" stroke="rgb(242,239,186)" stroke-width="9.3"/><path d="M-38.46 -32.27 A50.2 50.2 0 0 1 -34.82 -36.16" fill="none" stroke="rgb(249,238,187)" stroke-width="9.3"/><path d="M-35.5 -35.5 A50.2 50.2 0 0 1 -31.54 -39.06" fill="none" stroke="rgb(250,233,178)" stroke-width="9.3"/><path d="M-32.27 -38.46 A50.2 50.2 0 0 1 -28.01 -41.66" fill="none" stroke="rgb(252,227,168)" stroke-width="9.3"/><path d="M-28.79 -41.12 A50.2 50.2 0 0 1 -24.28 -43.94" fill="none" stroke="rgb(253,222,159)" stroke-width="9.3"/><path d="M-25.1 -43.47 A50.2 50.2 0 0 1 -20.35 -45.89" fill="none" stroke="rgb(255,216,150)" stroke-width="9.3"/><path d="M-21.22 -45.5 A50.2 50.2 0 0 1 -16.28 -47.49" fill="none" stroke="rgb(255,208,141)" stroke-width="9.3"/><path d="M-17.17 -47.17 A50.2 50.2 0 0 1 -12.08 -48.73" fill="none" stroke="rgb(255,200,132)" stroke-width="9.3"/><path d="M-12.99 -48.49 A50.2 50.2 0 0 1 -7.78 -49.59" fill="none" stroke="rgb(255,191,123)" stroke-width="9.3"/><path d="M-8.72 -49.44 A50.2 50.2 0 0 1 -3.43 -50.08" fill="none" stroke="rgb(255,183,114)" stroke-width="9.3"/><path d="M-4.38 -50.01 A50.2 50.2 0 0 1 0.95 -50.19" fill="none" stroke="rgb(255,175,105)" stroke-width="9.3"/><path d="M0 -50.2 A50.2 50.2 0 0 1 5.32 -49.92" fill="none" stroke="rgb(255,166,96)" stroke-width="9.3"/><path d="M4.38 -50.01 A50.2 50.2 0 0 1 9.65 -49.26" fill="none" stroke="rgb(255,156,87)" stroke-width="9.3"/><path d="M8.72 -49.44 A50.2 50.2 0 0 1 13.9 -48.24" fill="none" stroke="rgb(255,145,78)" stroke-width="9.3"/><path d="M12.99 -48.49 A50.2 50.2 0 0 1 18.06 -46.84" fill="none" stroke="rgb(255,135,69)" stroke-width="9.3"/><path d="M17.17 -47.17 A50.2 50.2 0 0 1 22.07 -45.09" fill="none" stroke="rgb(255,125,60)" stroke-width="9.3"/><path d="M21.22 -45.5 A50.2 50.2 0 0 1 25.91 -42.99" fill="none" stroke="rgb(254,117,53)" stroke-width="9.3"/><path d="M25.1 -43.47 A50.2 50.2 0 0 1 29.56 -40.57" fill="none" stroke="rgb(253,108,46)" stroke-width="9.3"/><path d="M28.79 -41.12 A50.2 50.2 0 0 1 32.99 -37.84" fill="none" stroke="rgb(253,99,39)" stroke-width="9.3"/><path d="M32.27 -38.46 A50.2 50.2 0 0 1 36.16 -34.82" fill="none" stroke="rgb(252,90,32)" stroke-width="9.3"/><path d="M35.5 -35.5 A50.2 50.2 0 0 1 39.06 -31.54" fill="none" stroke="rgb(249,84,29)" stroke-width="9.3"/><path d="M38.46 -32.27 A50.2 50.2 0 0 1 41.66 -28.01" fill="none" stroke="rgb(246,77,26)" stroke-width="9.3"/><path d="M41.12 -28.79 A50.2 50.2 0 0 1 43.94 -24.28" fill="none" stroke="rgb(243,70,22)" stroke-width="9.3"/><path d="M43.47 -25.1 A50.2 50.2 0 0 1 45.89 -20.35" fill="none" stroke="rgb(241,64,19)" stroke-width="9.3"/><path d="M45.5 -21.22 A50.2 50.2 0 0 1 47.49 -16.28" fill="none" stroke="rgb(238,58,16)" stroke-width="9.3"/><path d="M47.17 -17.17 A50.2 50.2 0 0 1 48.73 -12.08" fill="none" stroke="rgb(233,53,14)" stroke-width="9.3"/><path d="M48.49 -12.99 A50.2 50.2 0 0 1 49.59 -7.78" fill="none" stroke="rgb(229,49,13)" stroke-width="9.3"/><path d="M49.44 -8.72 A50.2 50.2 0 0 1 50.08 -3.43" fill="none" stroke="rgb(224,45,11)" stroke-width="9.3"/><path d="M50.01 -4.38 A50.2 50.2 0 0 1 50.19 0.95" fill="none" stroke="rgb(220,41,10)" stroke-width="9.3"/><path d="M50.2 -0 A50.2 50.2 0 0 1 49.92 5.32" fill="none" stroke="rgb(215,37,8)" stroke-width="9.3"/><path d="M50.01 4.38 A50.2 50.2 0 0 1 49.26 9.65" fill="none" stroke="rgb(209,34,8)" stroke-width="9.3"/><path d="M49.44 8.72 A50.2 50.2 0 0 1 48.24 13.9" fill="none" stroke="rgb(202,31,7)" stroke-width="9.3"/><path d="M48.49 12.99 A50.2 50.2 0 0 1 46.84 18.06" fill="none" stroke="rgb(195,29,7)" stroke-width="9.3"/><path d="M47.17 17.17 A50.2 50.2 0 0 1 45.09 22.07" fill="none" stroke="rgb(188,26,6)" stroke-width="9.3"/><path d="M45.5 21.22 A50.2 50.2 0 0 1 42.99 25.91" fill="none" stroke="rgb(181,23,6)" stroke-width="9.3"/><path d="M43.47 25.1 A50.2 50.2 0 0 1 40.57 29.56" fill="none" stroke="rgb(175,20,5)" stroke-width="9.3"/><path d="M41.12 28.79 A50.2 50.2 0 0 1 37.84 32.99" fill="none" stroke="rgb(168,18,5)" stroke-width="9.3"/><path d="M38.46 32.27 A50.2 50.2 0 0 1 35.5 35.5" fill="none" stroke="rgb(161,15,4)" stroke-width="9.3"/><circle cx="-35.5" cy="35.5" r="4.65" fill="rgb(46,150,56)"/><circle cx="35.5" cy="35.5" r="4.65" fill="rgb(158,14,4)"/><circle cx="0" cy="0" r="37.9" fill="#dcdcdc"/><path d="M-12.73 12.73 L-23.33 23.33" stroke="#26292c" stroke-width="3.4"/></svg>
<div class="t" style="left:549.7px;top:383.9px;font-size:9px;line-height:9px;color:#f2f2f2;font-weight:bold;transform:scaleX(0.88);">2.500</div>
<div class="t" style="left:511.25px;top:393.1px;font-size:9px;line-height:9px;color:#f2f2f2;font-weight:bold;transform:scaleX(0.89);">2.000</div>
<div class="t" style="left:587.5px;top:393.1px;font-size:9px;line-height:9px;color:#f2f2f2;font-weight:bold;transform:scaleX(0.87);">3.000</div>
<div class="t" style="left:482.5px;top:418.5px;font-size:9px;line-height:9px;color:#f2f2f2;font-weight:bold;transform:scaleX(0.87);">1.500</div>
<div class="t" style="left:617px;top:418.5px;font-size:9px;line-height:9px;color:#f2f2f2;font-weight:bold;transform:scaleX(0.88);">3.500</div>
<div class="t" style="left:467.2px;top:454.2px;font-size:9px;line-height:9px;color:#f2f2f2;font-weight:bold;transform:scaleX(0.86);">1.000</div>
<div class="t" style="left:632.6px;top:454.2px;font-size:9px;line-height:9px;color:#f2f2f2;font-weight:bold;transform:scaleX(0.86);">4.000</div>
<div class="t" style="left:470px;top:493.5px;font-size:9px;line-height:9px;color:#f2f2f2;font-weight:bold;transform:scaleX(0.89);">0.500</div>
<div class="t" style="left:629.7px;top:493.5px;font-size:9px;line-height:9px;color:#f2f2f2;font-weight:bold;transform:scaleX(0.86);">4.500</div>
<div class="t" style="left:490.8px;top:527.3px;font-size:9px;line-height:9px;color:#f2f2f2;font-weight:bold;transform:scaleX(0.88);">0.000</div>
<div class="t" style="left:608.6px;top:527.3px;font-size:9px;line-height:9px;color:#f2f2f2;font-weight:bold;transform:scaleX(0.84);">5.000</div>
<div class="t" style="left:556.26px;top:510.85px;font-size:11.5px;line-height:11.5px;color:#f2f2f2;font-weight:bold;transform:scaleX(0.95);">A</div>
<div class="t" style="left:636.7px;top:509.8px;font-size:8.6px;line-height:8.6px;color:#f2f2f2;font-weight:bold;transform:scaleX(0.87);">Max Value</div>
<div class="a" style="left:633.8px;top:524.6px;width:40.9px;height:20px;background:#1f1f1f;border:1px solid #7a7a7a;box-sizing:border-box;"></div>
<div class="t" style="left:641.91px;top:529.3px;font-size:11px;line-height:11px;color:#f2f2f2;transform:scaleX(0.9);">5.000</div>
<div class="a" style="left:507.3px;top:545.3px;width:107.5px;height:29.1px;background:#1f1f1f;border:1px solid #6a6a6a;box-sizing:border-box;border-radius:2px;"></div>
<svg class="a" style="left:518.9px;top:550.15px" width="11.6" height="20" viewBox="0 0 11.6 20"><path d="M0 6.3 L11.6 6.3 L5.8 0.3 Z M0 13.3 L11.6 13.3 L5.8 19.3 Z" fill="#fff"/></svg>
<div class="t" style="left:549.9px;top:549.25px;font-size:20.5px;line-height:20.5px;color:#f6f6f6;-webkit-text-stroke:0.25px #f6f6f6;transform:scaleX(0.97);">0.000</div>
<div class="t" style="left:626.4px;top:550.75px;font-size:16.5px;line-height:16.5px;color:#f6f6f6;-webkit-text-stroke:0.3px #f6f6f6;transform:scaleX(0.98);">A</div>
<div class="a" style="left:689.2px;top:356.9px;width:159.5px;height:112.6px;background:#1c2d39;border:1.4px solid #86929a;box-sizing:border-box;border-radius:0 0 7px 7px;"></div>
<div class="a" style="left:690.6px;top:358.3px;width:156.7px;height:24px;background:#2e2e2e;"></div>
<div class="a" style="left:688.8px;top:356px;width:25.5px;height:2.8px;background:#fff;"></div>
<div class="a" style="left:688.8px;top:356px;width:2.8px;height:25.5px;background:#fff;"></div>
<div class="a" style="left:823.6px;top:356px;width:25.5px;height:2.8px;background:#fff;"></div>
<div class="a" style="left:846.3px;top:356px;width:2.8px;height:25.5px;background:#fff;"></div>
<div class="a" style="left:688.8px;top:452.7px;width:17px;height:17px;border-left:2.8px solid #fff;border-bottom:2.8px solid #fff;border-radius:0 0 0 8px;box-sizing:border-box;"></div>
<div class="a" style="left:832.1px;top:452.7px;width:17px;height:17px;border-right:2.8px solid #fff;border-bottom:2.8px solid #fff;border-radius:0 0 8px 0;box-sizing:border-box;"></div>
<div class="t" style="left:714.4px;top:365.35px;font-size:12.5px;line-height:12.5px;color:#f0f0f0;-webkit-text-stroke:0.4px #f0f0f0;transform:scaleX(0.92);">Time Synchronization</div>
<div class="a" style="left:752px;top:394.9px;width:33.8px;height:16.4px;background:#07630a;border:2px solid #e6e6e6;box-sizing:border-box;"></div>
<div class="a" style="left:756.5px;top:398.5px;width:5px;height:1.2px;background:#7fd07f;"></div>
<div class="a" style="left:723px;top:434px;width:92px;height:25px;background:#7b7b7b;border:1.5px solid #a4a4a4;box-sizing:border-box;border-radius:5px;"></div>
<div class="t" style="left:740px;top:441.3px;font-size:12px;line-height:12px;color:#f4f4f4;-webkit-text-stroke:0.35px #f4f4f4;transform:scaleX(0.88);">Synchronize</div>
<div class="a" style="left:689.2px;top:477.5px;width:159.7px;height:111.6px;background:#1c2d39;border:1.4px solid #86929a;box-sizing:border-box;border-radius:0 0 7px 7px;"></div>
<div class="a" style="left:690.6px;top:478.9px;width:156.9px;height:23.2px;background:#2e2e2e;"></div>
<div class="a" style="left:688.8px;top:476.6px;width:25.5px;height:2.8px;background:#fff;"></div>
<div class="a" style="left:688.8px;top:476.6px;width:2.8px;height:25.5px;background:#fff;"></div>
<div class="a" style="left:823.8px;top:476.6px;width:25.5px;height:2.8px;background:#fff;"></div>
<div class="a" style="left:846.5px;top:476.6px;width:2.8px;height:25.5px;background:#fff;"></div>
<div class="a" style="left:688.8px;top:572.3px;width:17px;height:17px;border-left:2.8px solid #fff;border-bottom:2.8px solid #fff;border-radius:0 0 0 8px;box-sizing:border-box;"></div>
<div class="a" style="left:832.3px;top:572.3px;width:17px;height:17px;border-right:2.8px solid #fff;border-bottom:2.8px solid #fff;border-radius:0 0 8px 0;box-sizing:border-box;"></div>
<div class="t" style="left:727.8px;top:485.45px;font-size:12.5px;line-height:12.5px;color:#f0f0f0;-webkit-text-stroke:0.4px #f0f0f0;transform:scaleX(0.94);">Backlight Adjust</div>
<div class="a" style="left:702.6px;top:517.7px;width:135.4px;height:12px;background:#15222c;border:1px solid #6f7d86;box-sizing:border-box;border-radius:2px;"></div>
<div class="a" style="left:702.8px;top:518.3px;width:12.7px;height:10.9px;background:#dadada;border-radius:3px;"></div>
<div class="a" style="left:710px;top:543.7px;width:2px;height:8px;background:#c4c9cc;"></div>
<div class="a" style="left:733px;top:543.7px;width:2px;height:8px;background:#c4c9cc;"></div>
<div class="a" style="left:757px;top:543.7px;width:2px;height:8px;background:#c4c9cc;"></div>
<div class="a" style="left:781px;top:543.7px;width:2px;height:8px;background:#c4c9cc;"></div>
<div class="a" style="left:806px;top:543.7px;width:2px;height:8px;background:#c4c9cc;"></div>
<div class="a" style="left:833px;top:543.7px;width:2px;height:8px;background:#c4c9cc;"></div>
<div class="t" style="left:706.4px;top:561.95px;font-size:12.5px;line-height:12.5px;color:#e8eaec;font-weight:bold;transform:scaleX(0.95);">0</div>
<div class="t" style="left:728.3px;top:561.95px;font-size:12.5px;line-height:12.5px;color:#e8eaec;font-weight:bold;transform:scaleX(0.95);">1</div>
<div class="t" style="left:750.5px;top:561.95px;font-size:12.5px;line-height:12.5px;color:#e8eaec;font-weight:bold;transform:scaleX(0.95);">2</div>
<div class="t" style="left:773px;top:561.95px;font-size:12.5px;line-height:12.5px;color:#e8eaec;font-weight:bold;transform:scaleX(0.95);">3</div>
<div class="t" style="left:795.2px;top:561.95px;font-size:12.5px;line-height:12.5px;color:#e8eaec;font-weight:bold;transform:scaleX(0.95);">4</div>
<div class="t" style="left:821px;top:561.95px;font-size:12.5px;line-height:12.5px;color:#e8eaec;font-weight:bold;transform:scaleX(0.95);">5</div>
<div class="a" style="left:856.5px;top:90.9px;width:151px;height:498.2px;background:#1c2d39;border:1.4px solid #86929a;box-sizing:border-box;border-radius:0 0 7px 7px;"></div>
<div class="a" style="left:857.9px;top:92.3px;width:148.2px;height:23.5px;background:#2e2e2e;"></div>
<div class="a" style="left:856.1px;top:90px;width:25.5px;height:2.8px;background:#fff;"></div>
<div class="a" style="left:856.1px;top:90px;width:2.8px;height:25.5px;background:#fff;"></div>
<div class="a" style="left:982.4px;top:90px;width:25.5px;height:2.8px;background:#fff;"></div>
<div class="a" style="left:1005.1px;top:90px;width:2.8px;height:25.5px;background:#fff;"></div>
<div class="a" style="left:856.1px;top:572.3px;width:17px;height:17px;border-left:2.8px solid #fff;border-bottom:2.8px solid #fff;border-radius:0 0 0 8px;box-sizing:border-box;"></div>
<div class="a" style="left:990.9px;top:572.3px;width:17px;height:17px;border-right:2.8px solid #fff;border-bottom:2.8px solid #fff;border-radius:0 0 8px 0;box-sizing:border-box;"></div>
<div class="t" style="left:907.7px;top:97.85px;font-size:12.3px;line-height:12.3px;color:#f0f0f0;-webkit-text-stroke:0.4px #f0f0f0;transform:scaleX(0.9);">Basis Info</div>
<div class="t" style="left:875px;top:120.9px;font-size:10.8px;line-height:10.8px;color:#fff;-webkit-text-stroke:0.3px #fff;transform:scaleX(1.03);">Input Voltage</div>
<div class="a" style="left:872.8px;top:136.4px;width:83.4px;height:24.4px;border:2px solid #c8cbcd;box-sizing:border-box;"></div>
<div class="t" style="left:894.5px;top:140.65px;font-size:16.3px;line-height:16.3px;color:#f4f4f4;-webkit-text-stroke:0.4px #f4f4f4;transform:scaleX(0.97);">00.00</div>
<div class="t" style="left:960.5px;top:140.9px;font-size:16px;line-height:16px;color:#f4f4f4;-webkit-text-stroke:0.4px #f4f4f4;transform:scaleX(0.86);">V</div>
<div class="t" style="left:876.8px;top:167px;font-size:10.8px;line-height:10.8px;color:#fff;-webkit-text-stroke:0.3px #fff;transform:scaleX(1.03);">Output Voltage</div>
<div class="a" style="left:872.8px;top:182.2px;width:83.4px;height:24.6px;border:2px solid #c8cbcd;box-sizing:border-box;"></div>
<div class="t" style="left:894.5px;top:186.55px;font-size:16.3px;line-height:16.3px;color:#f4f4f4;-webkit-text-stroke:0.4px #f4f4f4;transform:scaleX(0.97);">00.00</div>
<div class="t" style="left:960.5px;top:186.8px;font-size:16px;line-height:16px;color:#f4f4f4;-webkit-text-stroke:0.4px #f4f4f4;transform:scaleX(0.86);">V</div>
<div class="t" style="left:876.8px;top:213px;font-size:10.8px;line-height:10.8px;color:#fff;-webkit-text-stroke:0.3px #fff;transform:scaleX(1.02);">Output Current</div>
<div class="a" style="left:872.8px;top:228.2px;width:83.4px;height:24.4px;border:2px solid #c8cbcd;box-sizing:border-box;"></div>
<div class="t" style="left:894.8px;top:232.45px;font-size:16.3px;line-height:16.3px;color:#f4f4f4;-webkit-text-stroke:0.4px #f4f4f4;transform:scaleX(0.96);">0.000</div>
<div class="t" style="left:960.3px;top:232.7px;font-size:16px;line-height:16px;color:#f4f4f4;-webkit-text-stroke:0.4px #f4f4f4;transform:scaleX(0.96);">A</div>
<div class="t" style="left:876.8px;top:259.2px;font-size:10.8px;line-height:10.8px;color:#fff;-webkit-text-stroke:0.3px #fff;transform:scaleX(1);">Output Power</div>
<div class="a" style="left:872.8px;top:274.1px;width:83.4px;height:24.4px;border:2px solid #c8cbcd;box-sizing:border-box;"></div>
<div class="t" style="left:894.5px;top:278.35px;font-size:16.3px;line-height:16.3px;color:#f4f4f4;-webkit-text-stroke:0.4px #f4f4f4;transform:scaleX(0.97);">00.00</div>
<div class="t" style="left:960.9px;top:278.6px;font-size:16px;line-height:16px;color:#f4f4f4;-webkit-text-stroke:0.4px #f4f4f4;transform:scaleX(0.9);">W</div>
<div class="t" style="left:876.8px;top:304.9px;font-size:10.8px;line-height:10.8px;color:#fff;-webkit-text-stroke:0.3px #fff;transform:scaleX(0.98);">System Temperature</div>
<div class="a" style="left:872.8px;top:320.2px;width:83.4px;height:24.4px;border:2px solid #c8cbcd;box-sizing:border-box;"></div>
<div class="t" style="left:905.3px;top:324.45px;font-size:16.3px;line-height:16.3px;color:#f4f4f4;-webkit-text-stroke:0.4px #f4f4f4;transform:scaleX(1.01);">00</div>
<div class="t" style="left:960.9px;top:324.7px;font-size:16px;line-height:16px;color:#f4f4f4;-webkit-text-stroke:0.4px #f4f4f4;transform:scaleX(0.78);">°C</div>
<div class="a" style="left:872.8px;top:358.6px;width:83.4px;height:24.6px;border:2px solid #c8cbcd;box-sizing:border-box;"></div>
<div class="t" style="left:900.8px;top:362.95px;font-size:16.3px;line-height:16.3px;color:#f4f4f4;-webkit-text-stroke:0.4px #f4f4f4;transform:scaleX(1);">000</div>
<div class="t" style="left:960.9px;top:363.2px;font-size:16px;line-height:16px;color:#f4f4f4;-webkit-text-stroke:0.4px #f4f4f4;transform:scaleX(0.77);">°F</div>
<div class="t" style="left:864.4px;top:411.7px;font-size:10.2px;line-height:10.2px;color:#fff;-webkit-text-stroke:0.35px #fff;transform:scaleX(0.92);">Normal</div>
<div class="a" style="left:900px;top:409.1px;width:29.8px;height:16.1px;background:#07630a;border:2px solid #e6e6e6;box-sizing:border-box;"></div>
<div class="a" style="left:904.5px;top:412.7px;width:5px;height:1.2px;background:#7fd07f;"></div>
<div class="t" style="left:869.3px;top:453.9px;font-size:11px;line-height:11px;color:#fff;-webkit-text-stroke:0.35px #fff;transform:scaleX(0.87);">OVP</div>
<div class="a" style="left:900px;top:450.7px;width:30px;height:16.6px;background:#500709;border:2px solid #e6e6e6;box-sizing:border-box;"></div>
<div class="a" style="left:904.5px;top:454.3px;width:5px;height:1.2px;background:#e0a060;"></div>
<div class="t" style="left:869.3px;top:487.7px;font-size:11px;line-height:11px;color:#fff;-webkit-text-stroke:0.35px #fff;transform:scaleX(0.85);">OCP</div>
<div class="a" style="left:900px;top:484.7px;width:30px;height:16.8px;background:#500709;border:2px solid #e6e6e6;box-sizing:border-box;"></div>
<div class="a" style="left:904.5px;top:488.3px;width:5px;height:1.2px;background:#e0a060;"></div>
<div class="t" style="left:870px;top:522.7px;font-size:11px;line-height:11px;color:#fff;-webkit-text-stroke:0.35px #fff;transform:scaleX(0.84);">OTP</div>
<div class="a" style="left:900px;top:519.4px;width:30px;height:16.6px;background:#500709;border:2px solid #e6e6e6;box-sizing:border-box;"></div>
<div class="a" style="left:904.5px;top:523px;width:5px;height:1.2px;background:#e0a060;"></div>
<div class="t" style="left:944.7px;top:487.7px;font-size:11px;line-height:11px;color:#fff;-webkit-text-stroke:0.35px #fff;transform:scaleX(0.86);">CV</div>
<div class="a" style="left:972px;top:484.7px;width:29.2px;height:16.8px;background:#07630a;border:2px solid #e6e6e6;box-sizing:border-box;"></div>
<div class="a" style="left:976.5px;top:488.3px;width:5px;height:1.2px;background:#7fd07f;"></div>
<div class="t" style="left:944.7px;top:522.7px;font-size:11px;line-height:11px;color:#fff;-webkit-text-stroke:0.35px #fff;transform:scaleX(0.82);">CC</div>
<div class="a" style="left:972px;top:519.4px;width:29.2px;height:16.6px;background:#07630a;border:2px solid #e6e6e6;box-sizing:border-box;"></div>
<div class="a" style="left:976.5px;top:523px;width:5px;height:1.2px;background:#7fd07f;"></div>
<div class="a" style="left:865.4px;top:552.9px;width:133.8px;height:24.7px;background:#7b7b7b;border:1.5px solid #a4a4a4;box-sizing:border-box;border-radius:5px;"></div>
<div class="a" style="left:897px;top:558.2px;width:14px;height:14px;border-radius:50%;background:#f0202a;"></div>
<div class="t" style="left:920.6px;top:557.5px;font-size:15.8px;line-height:15.8px;color:#f4f4f4;transform:scaleX(0.98);">On</div>
</body></html>
